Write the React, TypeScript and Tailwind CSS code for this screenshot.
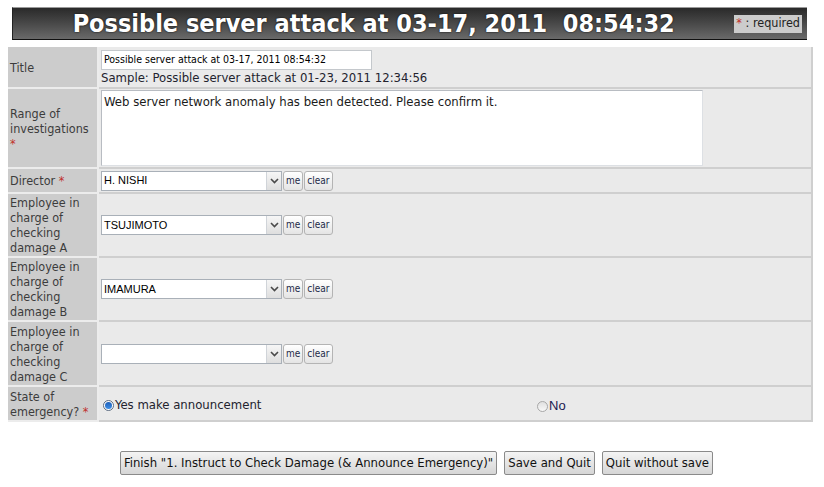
const Chevron = () => (
  <svg width="9" height="6" viewBox="0 0 9 6">
    <path d="M1 1 L4.5 4.5 L8 1" fill="none" stroke="#4a4a4a" strokeWidth="1.6" />
  </svg>
);

const Picker = ({ value }: { value: string }) => (
  <div className="flex items-center gap-[1px]">
    <div className="flex h-[20px] w-[181px] border border-[#a9b0b8] bg-white">
      <div className="flex flex-1 items-center pl-[2px] font-['Liberation_Sans',sans-serif] text-[11px] text-black">
        {value}
      </div>
      <div className="flex w-[15px] items-center justify-center border-l border-[#d0d4d9] bg-gradient-to-b from-[#f6f6f6] to-[#dedede]">
        <Chevron />
      </div>
    </div>
    <button className="h-[20px] rounded-[3px] border border-[#b4b4b4] bg-gradient-to-b from-white to-[#e4e4e4] px-[2px] text-[10px] leading-none text-[#1c2a48]">
      me
    </button>
    <button className="h-[20px] rounded-[3px] border border-[#b4b4b4] bg-gradient-to-b from-white to-[#e4e4e4] px-[2px] text-[10px] leading-none text-[#1c2a48]">
      clear
    </button>
  </div>
);

const Req = () => <span className="text-[#c0302a]"> *</span>;

const Row = ({
  label,
  h,
  children,
}: {
  label: React.ReactNode;
  h: string;
  children: React.ReactNode;
}) => (
  <div className={`flex ${h}`}>
    <div className="flex w-[91px] shrink-0 items-center border-b-2 border-r-2 border-[#ececec] bg-[#cccccc] px-[2px] text-[12.5px] leading-[15px] text-[#3c3c3c]">
      <div>{label}</div>
    </div>
    <div className="flex flex-1 items-center border-b-2 border-r-2 border-[#cfcfcf] bg-[#eaeaea] px-[2px]">
      {children}
    </div>
  </div>
);

const Radio = ({ on }: { on: boolean }) => (
  <span
    className={`mr-[1px] inline-flex h-[11px] w-[11px] items-center justify-center rounded-full border ${
      on ? "border-[#5a6a80] bg-white" : "border-[#a8a8a8] bg-gradient-to-b from-[#e0e0e0] to-[#f8f8f8]"
    }`}
  >
    {on && <span className="h-[7px] w-[7px] rounded-full bg-gradient-to-b from-[#1f5fb8] to-[#3d8ee6]" />}
  </span>
);

const Btn = ({ children }: { children: React.ReactNode }) => (
  <button className="h-[24px] rounded-[2px] border border-[#8a8a8a] bg-gradient-to-b from-[#f4f4f4] to-[#d6d6d6] px-[3px] text-[13px] text-[#111]">
    {children}
  </button>
);

export default function App() {
  return (
    <div className="min-h-screen bg-white pt-[7px] font-['DejaVu_Sans_Condensed','DejaVu_Sans',sans-serif]">
      <div className="ml-[12px] flex h-[33px] w-[795px] items-center border-t border-t-[#9a9a9a] border-b border-b-[#111] border-l border-l-[#222] bg-gradient-to-b from-[#2a2a2a] to-[#6a6a6a]">
        <div className="flex-1 text-center text-[25px] font-bold text-white [text-shadow:0_0_2px_#000]">
          Possible server attack at 03-17, 2011&nbsp; 08:54:32
        </div>
        <div className="mr-[5px] flex h-[18px] items-center bg-[#cccccc] px-[2px] text-[12.5px] text-[#222]">
          <span className="text-[#c0302a]">*</span>&nbsp;: required
        </div>
      </div>

      <div className="ml-[8px] mt-[7px] w-[805px] text-[12.5px] text-[#23232e]">
        <Row label="Title" h="h-[42px]">
          <div className="flex flex-col">
            <div className="flex h-[20px] w-[271px] items-center border border-[#c4c8cc] bg-white pl-[2px] text-[10.5px] text-black">
              Possible server attack at 03-17, 2011 08:54:32
            </div>
            <div className="text-[13px] leading-[15px]">Sample: Possible server attack at 01-23, 2011 12:34:56</div>
          </div>
        </Row>
        <Row label={<>Range of investigations<br /><Req /></>} h="h-[80px]">
          <div className="h-[76px] w-[602px] border border-[#b8bcc2] border-r-[#dde0e4] border-b-[#dde0e4] bg-white px-[2px] pt-[1px] text-[13px] text-[#1a1a1a]">
            Web server network anomaly has been detected. Please confirm it.
          </div>
        </Row>
        <Row label={<>Director<Req /></>} h="h-[25px]">
          <Picker value="H. NISHI" />
        </Row>
        <Row label="Employee in charge of checking damage A" h="h-[64px]">
          <Picker value="TSUJIMOTO" />
        </Row>
        <Row label="Employee in charge of checking damage B" h="h-[64px]">
          <Picker value="IMAMURA" />
        </Row>
        <Row label="Employee in charge of checking damage C" h="h-[65px]">
          <Picker value="" />
        </Row>
        <Row label={<>State of emergency?<Req /></>} h="h-[35px]">
          <div className="ml-[2px] flex w-[434px] items-center pt-[3px] text-[13px]">
            <Radio on />
            Yes make announcement
          </div>
          <div className="flex items-center pt-[5px] font-['Liberation_Sans',sans-serif] text-[13px] text-[#1a1a50]">
            <Radio on={false} />
            No
          </div>
        </Row>
      </div>

      <div className="mt-[29px] flex justify-center gap-[7px] pl-[9px]">
        <Btn>Finish "1. Instruct to Check Damage (&amp; Announce Emergency)"</Btn>
        <Btn>Save and Quit</Btn>
        <Btn>Quit without save</Btn>
      </div>
    </div>
  );
}
